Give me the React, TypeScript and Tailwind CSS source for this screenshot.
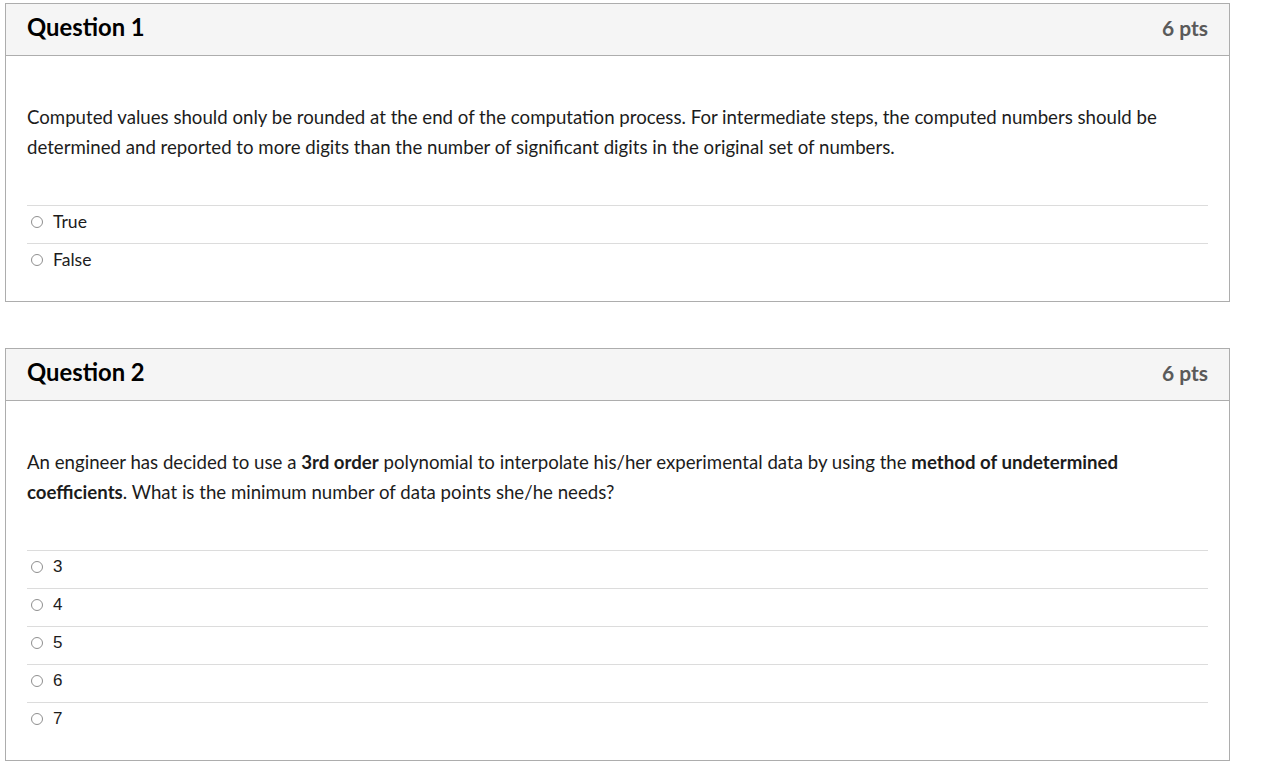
import React from "react";

function Radio() {
  return (
    <span className="inline-block h-[12px] w-[12px] shrink-0 rounded-full border border-[#8f8f8f] bg-white" />
  );
}

function Option({ label, digit }: { label: string; digit?: boolean }) {
  return (
    <div className="flex h-[38px] items-center gap-[10px] border-t border-[#dcdcdc] pb-[5px] pl-[4px]">
      <Radio />
      <span
        className={
          digit
            ? "text-[17px] text-[#1c1c1c] [font-family:'Liberation_Sans',Arial,sans-serif]"
            : "text-[17.6px] text-[#1c1c1c]"
        }
      >
        {label}
      </span>
    </div>
  );
}

function Question({
  title,
  points,
  children,
  options,
  digits,
}: {
  title: string;
  points: string;
  children: React.ReactNode;
  options: string[];
  digits?: boolean;
}) {
  return (
    <div className="w-[1225px] border border-[#adadad] bg-white">
      <div className="flex h-[52px] items-center justify-between border-b border-[#adadad] bg-[#f5f5f5] px-[21px] pb-[3px]">
        <h2 className="text-[23.8px] font-bold text-[#000]">{title}</h2>
        <span className="text-[21px] font-bold text-[#5a5a5a]">{points}</span>
      </div>
      <div className="px-[21px] pb-[20px] pt-[46px]">
        <p className="text-[18.65px] leading-[30px] text-[#1c1c1c]">{children}</p>
        <div className="mt-[43px]">
          {options.map((o) => (
            <Option key={o} label={o} digit={digits} />
          ))}
        </div>
      </div>
    </div>
  );
}

export default function App() {
  return (
    <div className="min-h-[766px] bg-white pl-[5px] pt-[3px] [font-family:Lato,'Noto_Sans',sans-serif]">
      <Question title="Question 1" points="6 pts" options={["True", "False"]}>
        Computed values should only be rounded at the end of the computation process. For intermediate steps, the
        computed numbers should be determined and reported to more digits than the number of significant digits in the
        original set of numbers.
      </Question>
      <div className="h-[46px]" />
      <Question title="Question 2" points="6 pts" options={["3", "4", "5", "6", "7"]} digits>
        An engineer has decided to use a <strong>3rd order</strong> polynomial to interpolate his/her experimental data by
        using the <strong>method of undetermined coefficients</strong>. What is the minimum number of data points she/he
        needs?
      </Question>
    </div>
  );
}
